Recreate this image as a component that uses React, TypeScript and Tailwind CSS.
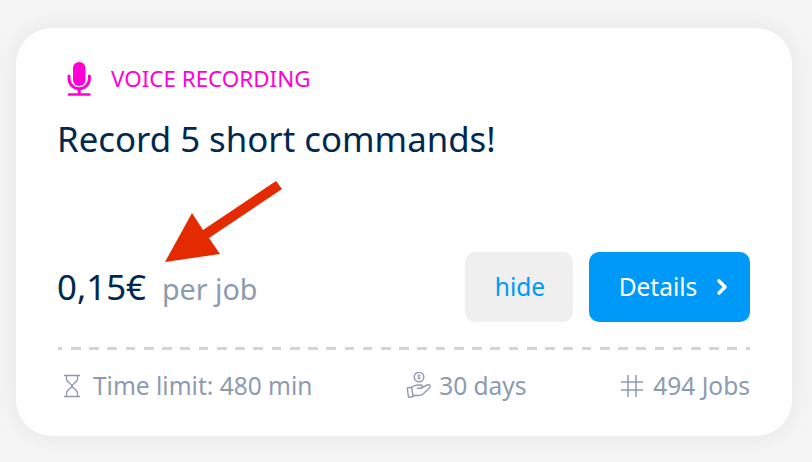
const MicIcon = () => (
  <svg className="h-[36px] w-[24px]" viewBox="0 0 24 36" fill="none">
    <rect x="6" y="1" width="12.500" height="24" rx="6.200" fill="#ff00d4" />
    <path d="M2 15v2.500a10.200 10.200 0 0 0 20.400 0v-2.500" stroke="#ff00d4" strokeWidth="3" strokeLinecap="round" />
    <path d="M12.200 28v5" stroke="#ff00d4" strokeWidth="3" />
    <path d="M2 33.500h20.400" stroke="#ff00d4" strokeWidth="2.600" strokeLinecap="round" />
  </svg>
);

const HourglassIcon = () => (
  <svg className="h-[24px] w-[18px]" viewBox="0 0 18 24" fill="none" stroke="#8d9bb0" strokeWidth="1.300">
    <path d="M1 1.500h16M1 22.500h16" />
    <path d="M3.500 1.500v3.500c0 3 5.500 5 5.500 7s-5.500 4-5.500 7v3.500M14.500 1.500v3.500c0 3-5.500 5-5.500 7s5.500 4 5.500 7v3.500" />
  </svg>
);

const HandCoinIcon = () => (
  <svg className="h-[28px] w-[26px]" viewBox="0 0 26 28" fill="none" stroke="#8d9bb0" strokeWidth="1.400" strokeLinejoin="round" strokeLinecap="round">
    <circle cx="13" cy="5" r="4.800" />
    <path d="M13 2.500v5M14.400 3.500c-.9-.7-2.800-.5-2.800.5 0 1.300 2.800.6 2.800 2 0 1-1.900 1.100-2.800.4" strokeWidth="0.900" />
    <path d="M5.500 15.500c2-1.500 4-2.500 6-2.500h3.500c2 0 2 3.200 0 3.200h-3.500" />
    <path d="M15.500 15.800l6-2.800c2.500-1.100 3.700 1.500 1.900 3l-6.400 6c-1.500 1.200-3 1.500-4.500 1.500H7" />
    <path d="M1.300 16l4.200-.8 1.700 9.300-3.700.8c-.7.100-1 0-1.100-.8z" />
  </svg>
);

const HashIcon = () => (
  <svg className="h-[24px] w-[24px]" viewBox="0 0 24 24" fill="none" stroke="#8d9bb0" strokeWidth="1.500">
    <path d="M1 8h22M1 16h22M8 1v22M16 1v22" />
  </svg>
);

const DetailsChevron = () => (
  <svg className="h-[18px] w-[12px]" viewBox="0 0 12 18" fill="none" stroke="#ffffff" strokeWidth="3.600" strokeLinejoin="round" strokeLinecap="round">
    <path d="M3 3l6 6-6 6" />
  </svg>
);

const App = () => {
  return (
    <div className="h-[462px] w-[812px] bg-[#f5f5f5] px-4 pt-7 font-['Noto_Sans','Open_Sans',sans-serif]">
      <div className="relative h-[408px] w-[776px] rounded-[36px] bg-white px-[42px] pt-[32px] shadow-[0_0_24px_rgba(30,40,60,0.08)]">
        <div className="flex h-[38px] items-center gap-[20px] pl-[9px]">
          <MicIcon />
          <span className="text-[22.4px] text-[#ff00d4]">VOICE RECORDING</span>
        </div>
        <h1 className="mt-[19px] -ml-px text-[34.8px] leading-[44px] text-[#002850]">Record 5 short commands!</h1>

        <div className="mt-[91px] flex items-center justify-between">
          <div className="-ml-px flex items-baseline gap-[16px] pt-[2px]">
            <span className="text-[34.8px] leading-[44px] text-[#002850]">0,15€</span>
            <span className="text-[28.7px] leading-[44px] text-[#8d9bb0]">per job</span>
          </div>
          <div className="flex gap-4">
            <button className="h-[70px] w-[108px] rounded-[10px] bg-[#efefef] pl-[2px] text-[24.5px] text-[#0099f7]" type="button">
              hide
            </button>
            <button className="flex h-[70px] w-[161px] items-center justify-center gap-[19px] rounded-[10px] bg-[#0099f7] pl-[8px] text-[24.5px] text-white" type="button">
              Details
              <DetailsChevron />
            </button>
          </div>
        </div>

        <div className="mt-[25px] h-[3px] bg-[repeating-linear-gradient(90deg,#d4d4d4_0_4.5px,transparent_4.5px_13px,#d4d4d4_13px_18.235px)]" />

        <div className="mt-[18px] flex items-center justify-between text-[24.5px] text-[#8d9bb0]">
          <div className="flex items-center gap-[12px] pl-[5px]">
            <HourglassIcon />
            <span>Time limit: 480 min</span>
          </div>
          <div className="flex items-center gap-[7px]">
            <HandCoinIcon />
            <span>30 days</span>
          </div>
          <div className="flex items-center gap-[9px]">
            <HashIcon />
            <span>494 Jobs</span>
          </div>
        </div>

        <svg className="absolute left-[148px] top-[152px] h-[84px] w-[120px]" viewBox="0 0 120 84">
          <path d="M112 1 L118 9 L45 58 L56 74 L1 82 L28 33 L39 50 Z" fill="#e42a00" />
        </svg>
      </div>
    </div>
  );
};

export default App;
